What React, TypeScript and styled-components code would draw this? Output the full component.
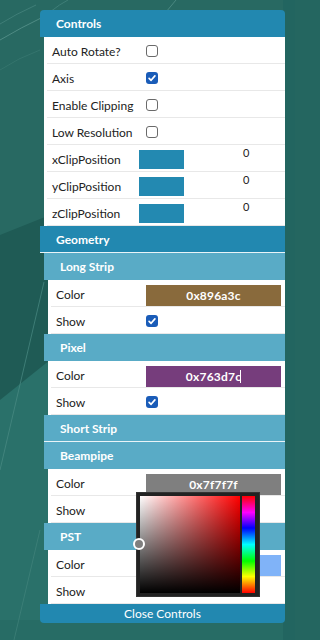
import styled, {createGlobalStyle} from "styled-components";

const GlobalStyle = createGlobalStyle`
    html, body {
        margin: 0;
        padding: 0;
        background: #246660;
    }

    body {
        font-family: Lato, "Open Sans", sans-serif;
    }
`

type RowItem =
    | { kind: "check"; label: string; checked: boolean }
    | { kind: "slider"; label: string; value: number }
    | { kind: "color"; label: string; color: string; caret?: boolean; picker?: boolean }

const controls: RowItem[] = [
    {kind: "check", label: "Auto Rotate?", checked: false},
    {kind: "check", label: "Axis", checked: true},
    {kind: "check", label: "Enable Clipping", checked: false},
    {kind: "check", label: "Low Resolution", checked: false},
    {kind: "slider", label: "xClipPosition", value: 0},
    {kind: "slider", label: "yClipPosition", value: 0},
    {kind: "slider", label: "zClipPosition", value: 0},
]

const geometry: { name: string; sep?: boolean; rows: RowItem[] }[] = [
    {
        name: "Long Strip",
        rows: [
            {kind: "color", label: "Color", color: "#896a3c"},
            {kind: "check", label: "Show", checked: true},
        ],
    },
    {
        name: "Pixel",
        rows: [
            {kind: "color", label: "Color", color: "#763d7c", caret: true},
            {kind: "check", label: "Show", checked: true},
        ],
    },
    {name: "Short Strip", sep: true, rows: []},
    {
        name: "Beampipe",
        rows: [
            {kind: "color", label: "Color", color: "#7f7f7f", picker: true},
            {kind: "check", label: "Show", checked: false},
        ],
    },
    {
        name: "PST",
        rows: [
            {kind: "color", label: "Color", color: "#80b3f8"},
            {kind: "check", label: "Show", checked: true},
        ],
    },
]

const toHex = (c: string) => "0x" + c.replace("#", "")

const Row = ({item, nested}: { item: RowItem; nested: boolean }) => {
    return (
        <RowWrap $nested={nested}>
            <RowBody>
                <Label $nested={nested} $wide={item.kind === "check" && !nested}>{item.label}</Label>
                {item.kind === "check" && (
                    <Check $checked={item.checked}>
                        {item.checked && (
                            <svg width="12" height="12" viewBox="0 0 12 12">
                                <path d="M3.1 6.3 L5.1 8.3 L8.9 3.9" fill="none" stroke="#fff" strokeWidth="1.7"
                                      strokeLinecap="round" strokeLinejoin="round"/>
                            </svg>
                        )}
                    </Check>
                )}
                {item.kind === "slider" && (
                    <>
                        <Slider/>
                        <NumberValue>{item.value}</NumberValue>
                    </>
                )}
                {item.kind === "color" && (
                    <Swatch $color={item.color}>
                        {toHex(item.color)}
                        {item.caret && <Caret/>}
                        {item.picker && (
                            <Picker>
                                <Saturation>
                                    <Marker/>
                                </Saturation>
                                <Hue/>
                            </Picker>
                        )}
                    </Swatch>
                )}
            </RowBody>
        </RowWrap>
    )
}

export default function App() {
    return (
        <Scene>
            <GlobalStyle/>
            <Backdrop viewBox="0 0 295 640" preserveAspectRatio="none">
                <rect x="0" y="0" width="295" height="640" fill="#286962"/>
                <polygon points="0,235 50,215 50,640 0,640" fill="#1f5b55"/>
                <polygon points="0,400 50,360 50,640 0,640" fill="#2a716a"/>
                <rect x="0" y="620" width="295" height="20" fill="#276c65"/>
                <rect x="283" y="0" width="12" height="640" fill="#226560"/>
                <path d="M0 40 Q20 28 45 16" stroke="#5f9a93" strokeWidth="1" fill="none" opacity="0.7"/>
                <path d="M0 24 Q16 14 36 5" stroke="#4f8c85" strokeWidth="1" fill="none" opacity="0.6"/>
                <path d="M50 12 Q60 4 68 0" stroke="#4f8c85" strokeWidth="1" fill="none" opacity="0.6"/>
                <path d="M166 12 L176 0" stroke="#5a958e" strokeWidth="1" fill="none" opacity="0.7"/>
                <path d="M0 70 Q18 58 40 50" stroke="#3f7f78" strokeWidth="1" fill="none" opacity="0.5"/>
                <path d="M44 282 L0 470" stroke="#4c8c84" strokeWidth="1" fill="none" opacity="0.7"/>
                <path d="M40 530 L14 640" stroke="#4c8c84" strokeWidth="1" fill="none" opacity="0.5"/>
            </Backdrop>

            <Panel>
                <Title $variant="main" $top>Controls</Title>
                {controls.map((item) => (
                    <Row key={item.label} item={item} nested={false}/>
                ))}
                <Title $variant="main" $sep>Geometry</Title>
                {geometry.map((folder) => (
                    <div key={folder.name}>
                        <Title $variant="sub" $sep={folder.sep}>{folder.name}</Title>
                        {folder.rows.map((item) => (
                            <Row key={folder.name + item.label} item={item} nested/>
                        ))}
                    </div>
                ))}
                <CloseButton>Close Controls</CloseButton>
            </Panel>
        </Scene>
    )
}

const Scene = styled.div`
    position: relative;
    width: 295px;
    height: 640px;
    overflow: hidden;
    padding: 10px 0 0 40px;
    box-sizing: border-box;
`

const Backdrop = styled.svg`
    position: absolute;
    left: 0;
    top: 0;
    width: 295px;
    height: 640px;
`

const Panel = styled.div`
    position: relative;
    z-index: 1;
    width: 245px;
    display: flex;
    flex-direction: column;
    font-size: 12px;
    color: #222;
`

const Title = styled.div<{ $variant: "main" | "sub"; $top?: boolean; $sep?: boolean }>`
    height: 26px;
    line-height: 27px;
    padding-left: 16px;
    margin-left: ${p => p.$variant === "sub" ? "4px" : "0"};
    background: ${p => p.$variant === "sub" ? "#59abc6" : "#2288b0"};
    border-bottom: 1px solid ${p => p.$sep ? "#e9f4f8" : p.$variant === "sub" ? "#59abc6" : "#2288b0"};
    border-radius: ${p => p.$top ? "4px 4px 0 0" : "0"};
    color: #fff;
    font-weight: 700;
    font-size: 12px;
`

const RowWrap = styled.div<{ $nested: boolean }>`
    margin-left: ${p => p.$nested ? "8px" : "4px"};
    padding-left: 3px;
    background: #fff;
`

const RowBody = styled.div`
    height: 26px;
    display: flex;
    align-items: center;
    border-bottom: 1px solid #e8e8e8;
`

const Label = styled.div<{ $nested: boolean; $wide: boolean }>`
    box-sizing: border-box;
    flex: none;
    width: ${p => p.$nested ? "95px" : p.$wide ? "99px" : "92px"};
    padding-left: 5px;
    padding-top: 2px;
    white-space: nowrap;
    font-size: 12px;
    color: #222;
`

const Check = styled.span<{ $checked: boolean }>`
    box-sizing: border-box;
    display: inline-flex;
    width: 12px;
    height: 12px;
    margin-top: 2px;
    border-radius: 3px;
    background: ${p => p.$checked ? "#1a5cb8" : "#fff"};
    border: ${p => p.$checked ? "none" : "1px solid #6a6a6a"};
`

const Slider = styled.div`
    align-self: flex-start;
    margin-top: 5px;
    width: 45px;
    height: 19px;
    background: #2389b1;
`

const NumberValue = styled.div`
    align-self: flex-start;
    margin-top: 2px;
    margin-left: 59px;
    font-size: 11px;
    line-height: 12px;
    color: #222;
`

const Swatch = styled.div<{ $color: string }>`
    position: relative;
    align-self: flex-start;
    margin-top: 5px;
    width: 135px;
    height: 21px;
    display: flex;
    align-items: center;
    justify-content: center;
    background: ${p => p.$color};
    color: #fff;
    font-weight: 700;
    font-size: 12px;
    letter-spacing: 0.2px;
`

const Caret = styled.span`
    display: inline-block;
    width: 1px;
    height: 13px;
    margin-left: -1px;
    background: #fff;
`

const Picker = styled.div`
    position: absolute;
    z-index: 10;
    left: -9px;
    top: 19px;
    display: flex;
    gap: 2px;
    padding: 3px 4px 3px 3px;
    background: #222;
    box-shadow: 0 0 0 1px #333;
`

const Saturation = styled.div`
    position: relative;
    width: 100px;
    height: 97px;
    background: linear-gradient(to top, #000, rgba(0, 0, 0, 0)),
    linear-gradient(to right, #fff, rgba(255, 255, 255, 0)),
    #ff0000;
`

const Marker = styled.span`
    position: absolute;
    left: -7px;
    top: 42px;
    width: 8px;
    height: 8px;
    border: 2px solid #fff;
    border-radius: 50%;
    background: #7f7f7f;
`

const Hue = styled.div`
    width: 13px;
    height: 97px;
    background: linear-gradient(to bottom, #f00 0%, #f0f 17%, #00f 33%, #0ff 50%, #0f0 67%, #ff0 83%, #f00 100%);
`

const CloseButton = styled.div`
    height: 19px;
    line-height: 19px;
    text-align: center;
    background: #2288b0;
    border-radius: 0 0 4px 4px;
    color: #fff;
    font-size: 12px;
`
